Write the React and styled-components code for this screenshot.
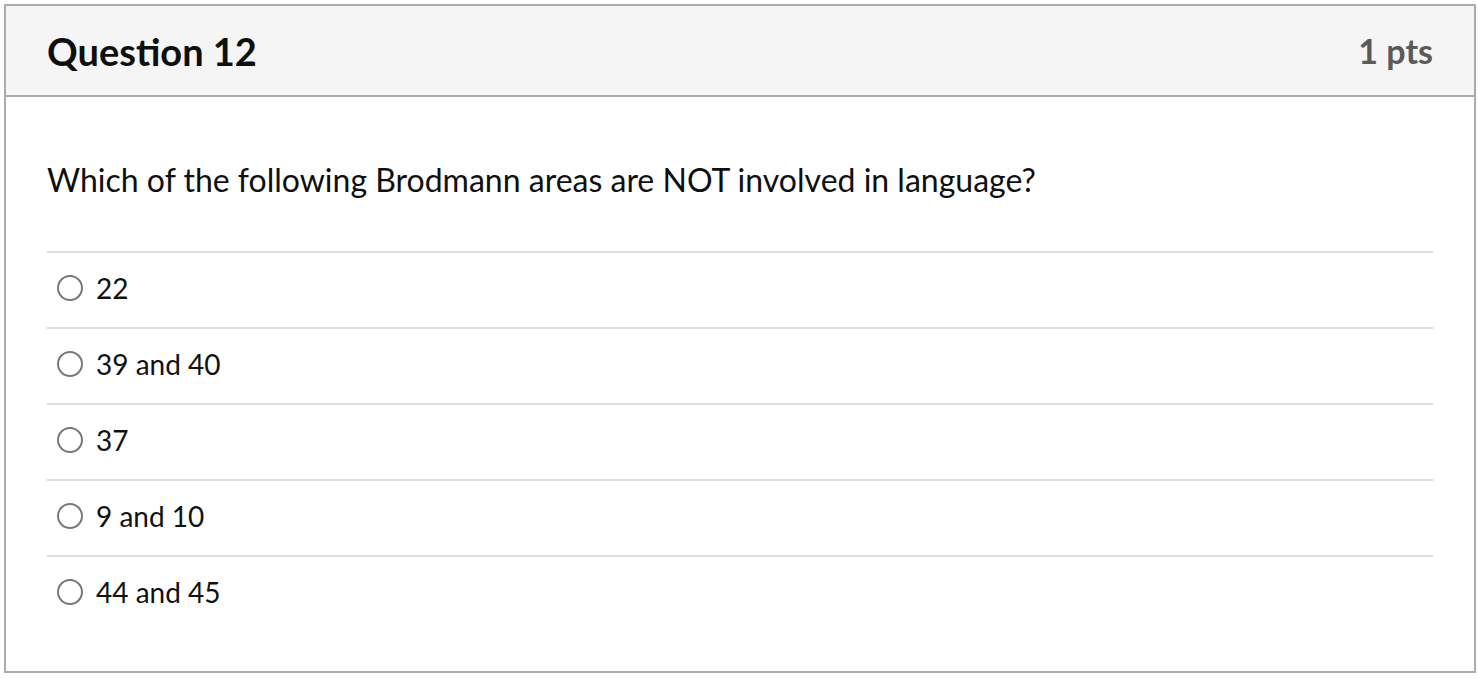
import React from 'react';
import styled, { createGlobalStyle } from 'styled-components';

const GlobalStyle = createGlobalStyle`
  body {
    margin: 0;
    background: #ffffff;
    font-family: Lato, "Noto Sans", sans-serif;
  }
`;

const Page = styled.div`
  padding: 4px 2px 0 4px;
`;

const Card = styled.div`
  border: 2px solid #ababab;
  box-sizing: border-box;
  height: 669px;
`;

const Header = styled.div`
  display: flex;
  align-items: center;
  justify-content: space-between;
  height: 89px;
  padding: 0 41px;
  background-color: #f5f5f5;
  border-bottom: 2px solid #ababab;
`;

const Title = styled.h2`
  margin: 0;
  font-size: 38px;
  font-weight: 700;
  color: #0f0f0f;
`;

const Points = styled.div`
  font-size: 34px;
  font-weight: 700;
  color: #5a5a5a;
`;

const Body = styled.div`
  padding: 0 41px;
`;

const QuestionText = styled.p`
  margin: 0;
  padding: 62px 0 50px;
  font-size: 32px;
  line-height: 42px;
  color: #0f0f0f;
`;

const Answers = styled.div`
  display: flex;
  flex-direction: column;
`;

const Answer = styled.label`
  display: flex;
  align-items: center;
  gap: 13px;
  height: 76px;
  padding: 0 0 4px 10px;
  box-sizing: border-box;
  border-top: 2px solid #dddddd;
  font-size: 28px;
  color: #111111;
`;

const Radio = styled.span`
  width: 22px;
  height: 22px;
  border: 2px solid #787878;
  border-radius: 50%;
  background: #fff;
  flex-shrink: 0;
`;

const answers = ['22', '39 and 40', '37', '9 and 10', '44 and 45'];

const App = () => {
  return (
    <Page>
      <GlobalStyle />
      <Card>
        <Header>
          <Title>Question 12</Title>
          <Points>1 pts</Points>
        </Header>
        <Body>
          <QuestionText>
            Which of the following Brodmann areas are NOT involved in language?
          </QuestionText>
          <Answers>
            {answers.map((a) => (
              <Answer key={a}>
                <Radio />
                {a}
              </Answer>
            ))}
          </Answers>
        </Body>
      </Card>
    </Page>
  );
};

export default App;
